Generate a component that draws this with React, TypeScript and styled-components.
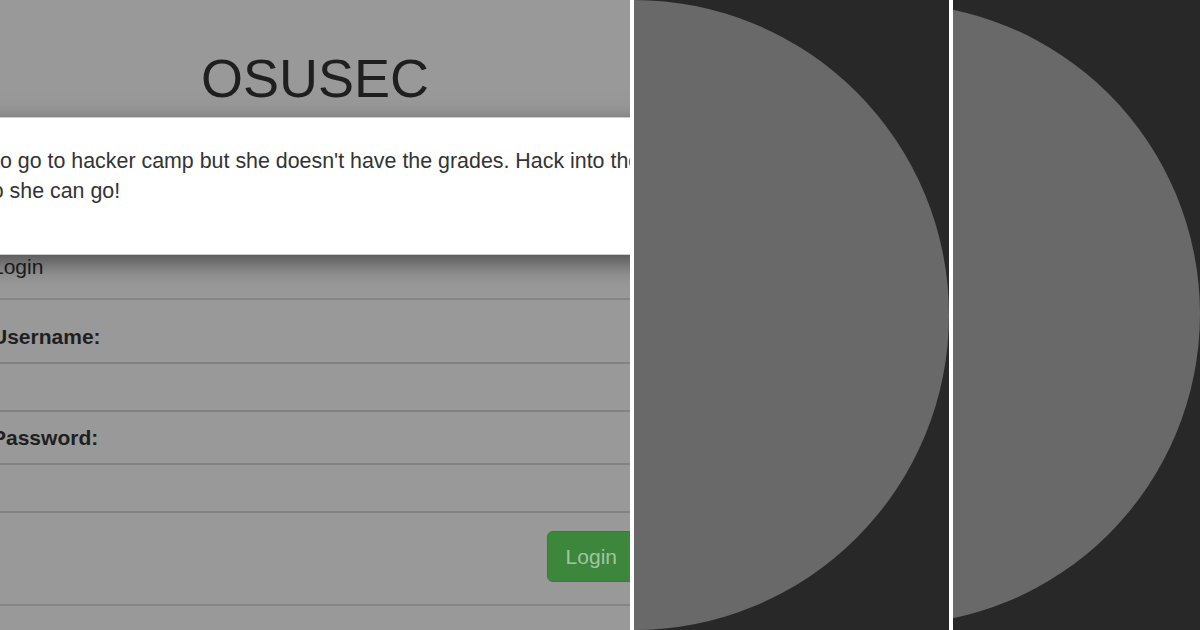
import React from "react";
import styled, { createGlobalStyle } from "styled-components";

const GlobalStyle = createGlobalStyle`
  html, body { margin: 0; padding: 0; background: #fff; }
  body { font-family: "Liberation Sans", Arial, Helvetica, sans-serif; }
  *, *::before, *::after { box-sizing: border-box; }
`;

const Collage = styled.main`
  display: grid;
  grid-template-columns: 630px 315px 1fr;
  column-gap: 4px;
  width: 1200px;
  height: 630px;
  background: #ffffff;
  overflow: hidden;
`;

const Shot = styled.section`
  position: relative;
  overflow: hidden;
  background: #999999;
  display: flex;
  flex-direction: column;
`;

const Header = styled.header`
  flex: 0 0 115px;
  padding-top: 49px;
  text-align: center;
`;

const Title = styled.h1`
  margin: 0;
  font-size: 54px;
  line-height: 59px;
  font-weight: 400;
  color: #1f1f1f;
`;

const Panel = styled.div`
  flex: 0 0 auto;
  margin: 124px 0 0 -8px;
  width: 644px;
  font-size: 21px;
  line-height: 30px;
  color: #1f1f1f;
`;

const PanelHeading = styled.div`
  padding: 13px 0 16px 0;
  border-bottom: 2px solid #868686;
`;

const PanelBody = styled.div`
  padding: 22px 0 22px 0;
  display: flex;
  flex-direction: column;
`;

const FormGroup = styled.div`
  display: flex;
  flex-direction: column;
  margin-bottom: 11px;
`;

const Label = styled.label`
  display: block;
  font-weight: 700;
  margin-bottom: 10px;
`;

const Field = styled.div`
  height: 50px;
  border: 2px solid #828282;
  border-radius: 6px;
  background: transparent;
`;

const Actions = styled.div`
  display: flex;
  justify-content: flex-end;
  margin-top: 7px;
`;

const Button = styled.button`
  height: 51px;
  padding: 0 18px;
  border: 1px solid #367b36;
  border-radius: 6px;
  background: #3c873c;
  color: #a3c4a3;
  font-family: inherit;
  font-size: 21px;
  line-height: 30px;
`;

const PanelFooter = styled.div`
  border-top: 2px solid #868686;
  height: 40px;
`;

const Modal = styled.div`
  position: absolute;
  top: 117px;
  left: -24px;
  right: -24px;
  height: 138px;
  background: #ffffff;
  border: 1px solid rgba(0, 0, 0, 0.2);
  box-shadow: 0 8px 22px rgba(0, 0, 0, 0.5);
  padding-top: 28px;
  font-size: 21.4px;
  line-height: 30px;
  color: #333333;
`;

const ModalLine = styled.p<{ $indent: number }>`
  margin: 0 0 0 ${(p) => p.$indent}px;
  white-space: nowrap;
`;

const DarkPane = styled.div`
  background: #282828;
  overflow: hidden;
  display: flex;
`;

const Orb = styled.svg`
  display: block;
  width: 100%;
  height: 100%;
`;

export default function App() {
  return (
    <>
      <GlobalStyle />
      <Collage>
        <Shot>
          <Header>
            <Title>OSUSEC</Title>
          </Header>
          <Panel>
            <PanelHeading>Login</PanelHeading>
            <PanelBody>
              <FormGroup>
                <Label>Username:</Label>
                <Field />
              </FormGroup>
              <FormGroup>
                <Label>Password:</Label>
                <Field />
              </FormGroup>
              <Actions>
                <Button type="button">Login</Button>
              </Actions>
            </PanelBody>
            <PanelFooter />
          </Panel>
          <Modal>
            <ModalLine $indent={17}>
              to go to hacker camp but she doesn't have the grades. Hack into the
            </ModalLine>
            <ModalLine $indent={4}>so she can go!</ModalLine>
          </Modal>
        </Shot>
        <DarkPane>
          <Orb viewBox="0 0 315 630" preserveAspectRatio="none">
            <circle cx="0" cy="315" r="315" fill="#696969" />
          </Orb>
        </DarkPane>
        <DarkPane>
          <Orb viewBox="0 0 247 630" preserveAspectRatio="none">
            <circle cx="-64" cy="314" r="311" fill="#696969" />
          </Orb>
        </DarkPane>
      </Collage>
    </>
  );
}
